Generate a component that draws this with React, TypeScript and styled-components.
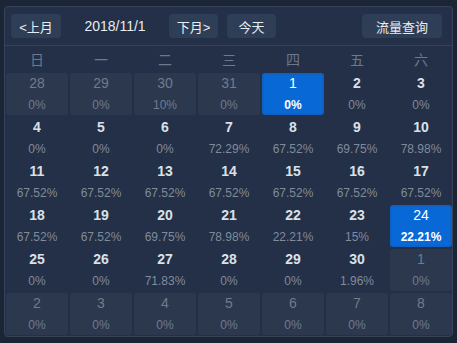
import React from 'react';
import styled, { createGlobalStyle } from 'styled-components';

const GlobalStyle = createGlobalStyle`
  html, body {
    margin: 0;
    padding: 0;
    background: #1c2535;
    font-family: "Liberation Sans", "Noto Sans CJK SC", sans-serif;
  }
`;

const Page = styled.div`
  padding: 6px 4px 4px 4px;
`;

const Panel = styled.div`
  background: #233047;
  border: 1px solid #36445b;
  border-radius: 4px;
  overflow: hidden;
`;

const Toolbar = styled.div`
  display: flex;
  align-items: center;
  height: 38px;
  padding: 0 10px 0 6px;
  border-bottom: 1px solid #35435a;
`;

const Btn = styled.button<{ $w: number }>`
  width: ${(p) => p.$w}px;
  height: 24px;
  padding: 0;
  border: none;
  border-radius: 4px;
  background: #2f3e57;
  color: #e8edf3;
  font-family: inherit;
  font-size: 13px;
  cursor: pointer;
`;

const DateLabel = styled.div`
  width: 108px;
  text-align: center;
  color: #e8edf3;
  font-size: 14px;
`;

const Gap = styled.div`
  width: 9px;
`;

const Spacer = styled.div`
  flex: 1;
`;

const WeekRow = styled.div`
  display: grid;
  grid-template-columns: repeat(7, 64px);
  height: 26px;
  align-items: center;
`;

const WeekDay = styled.div`
  text-align: center;
  color: #6c788b;
  font-size: 14px;
`;

const Grid = styled.div`
  display: grid;
  grid-template-columns: repeat(7, 64px);
  grid-auto-rows: 44px;
`;

const Cell = styled.div<{ $other?: boolean; $active?: boolean }>`
  margin: 1px;
  border-radius: 3px;
  display: flex;
  flex-direction: column;
  align-items: center;
  justify-content: center;
  gap: 7px;
  box-sizing: border-box;
  background: ${(p) => (p.$active ? '#0869d6' : p.$other ? '#2b384e' : 'transparent')};
  border: ${(p) => (p.$active ? '2px solid #1160c4' : 'none')};
`;

const Num = styled.div<{ $other?: boolean; $active?: boolean }>`
  font-size: 14px;
  font-weight: ${(p) => (p.$other || p.$active ? 'normal' : 'bold')};
  color: ${(p) => (p.$active ? '#ffffff' : p.$other ? '#6f7c8f' : '#d9e0e8')};
  line-height: 15px;
`;

const Pct = styled.div<{ $other?: boolean; $active?: boolean }>`
  font-size: 12px;
  font-weight: ${(p) => (p.$active ? 'bold' : 'normal')};
  color: ${(p) => (p.$active ? '#ffffff' : p.$other ? '#6f7c8f' : '#808b9c')};
  line-height: 14px;
`;

type Day = { d: number; p: string; other?: boolean; active?: boolean };

const days: Day[] = [
  { d: 28, p: '0%', other: true },
  { d: 29, p: '0%', other: true },
  { d: 30, p: '10%', other: true },
  { d: 31, p: '0%', other: true },
  { d: 1, p: '0%', active: true },
  { d: 2, p: '0%' },
  { d: 3, p: '0%' },
  { d: 4, p: '0%' },
  { d: 5, p: '0%' },
  { d: 6, p: '0%' },
  { d: 7, p: '72.29%' },
  { d: 8, p: '67.52%' },
  { d: 9, p: '69.75%' },
  { d: 10, p: '78.98%' },
  { d: 11, p: '67.52%' },
  { d: 12, p: '67.52%' },
  { d: 13, p: '67.52%' },
  { d: 14, p: '67.52%' },
  { d: 15, p: '67.52%' },
  { d: 16, p: '67.52%' },
  { d: 17, p: '67.52%' },
  { d: 18, p: '67.52%' },
  { d: 19, p: '67.52%' },
  { d: 20, p: '69.75%' },
  { d: 21, p: '78.98%' },
  { d: 22, p: '22.21%' },
  { d: 23, p: '15%' },
  { d: 24, p: '22.21%', active: true },
  { d: 25, p: '0%' },
  { d: 26, p: '0%' },
  { d: 27, p: '71.83%' },
  { d: 28, p: '0%' },
  { d: 29, p: '0%' },
  { d: 30, p: '1.96%' },
  { d: 1, p: '0%', other: true },
  { d: 2, p: '0%', other: true },
  { d: 3, p: '0%', other: true },
  { d: 4, p: '0%', other: true },
  { d: 5, p: '0%', other: true },
  { d: 6, p: '0%', other: true },
  { d: 7, p: '0%', other: true },
  { d: 8, p: '0%', other: true },
];

const weekNames = ['日', '一', '二', '三', '四', '五', '六'];

const App: React.FC = () => {
  return (
    <>
      <GlobalStyle />
      <Page>
        <Panel>
          <Toolbar>
            <Btn $w={50}>&lt;上月</Btn>
            <DateLabel>2018/11/1</DateLabel>
            <Btn $w={49}>下月&gt;</Btn>
            <Gap />
            <Btn $w={49}>今天</Btn>
            <Spacer />
            <Btn $w={80}>流量查询</Btn>
          </Toolbar>
          <WeekRow>
            {weekNames.map((w) => (
              <WeekDay key={w}>{w}</WeekDay>
            ))}
          </WeekRow>
          <Grid>
            {days.map((day, i) => (
              <Cell key={i} $other={day.other} $active={day.active}>
                <Num $other={day.other} $active={day.active}>{day.d}</Num>
                <Pct $other={day.other} $active={day.active}>{day.p}</Pct>
              </Cell>
            ))}
          </Grid>
        </Panel>
      </Page>
    </>
  );
};

export default App;
